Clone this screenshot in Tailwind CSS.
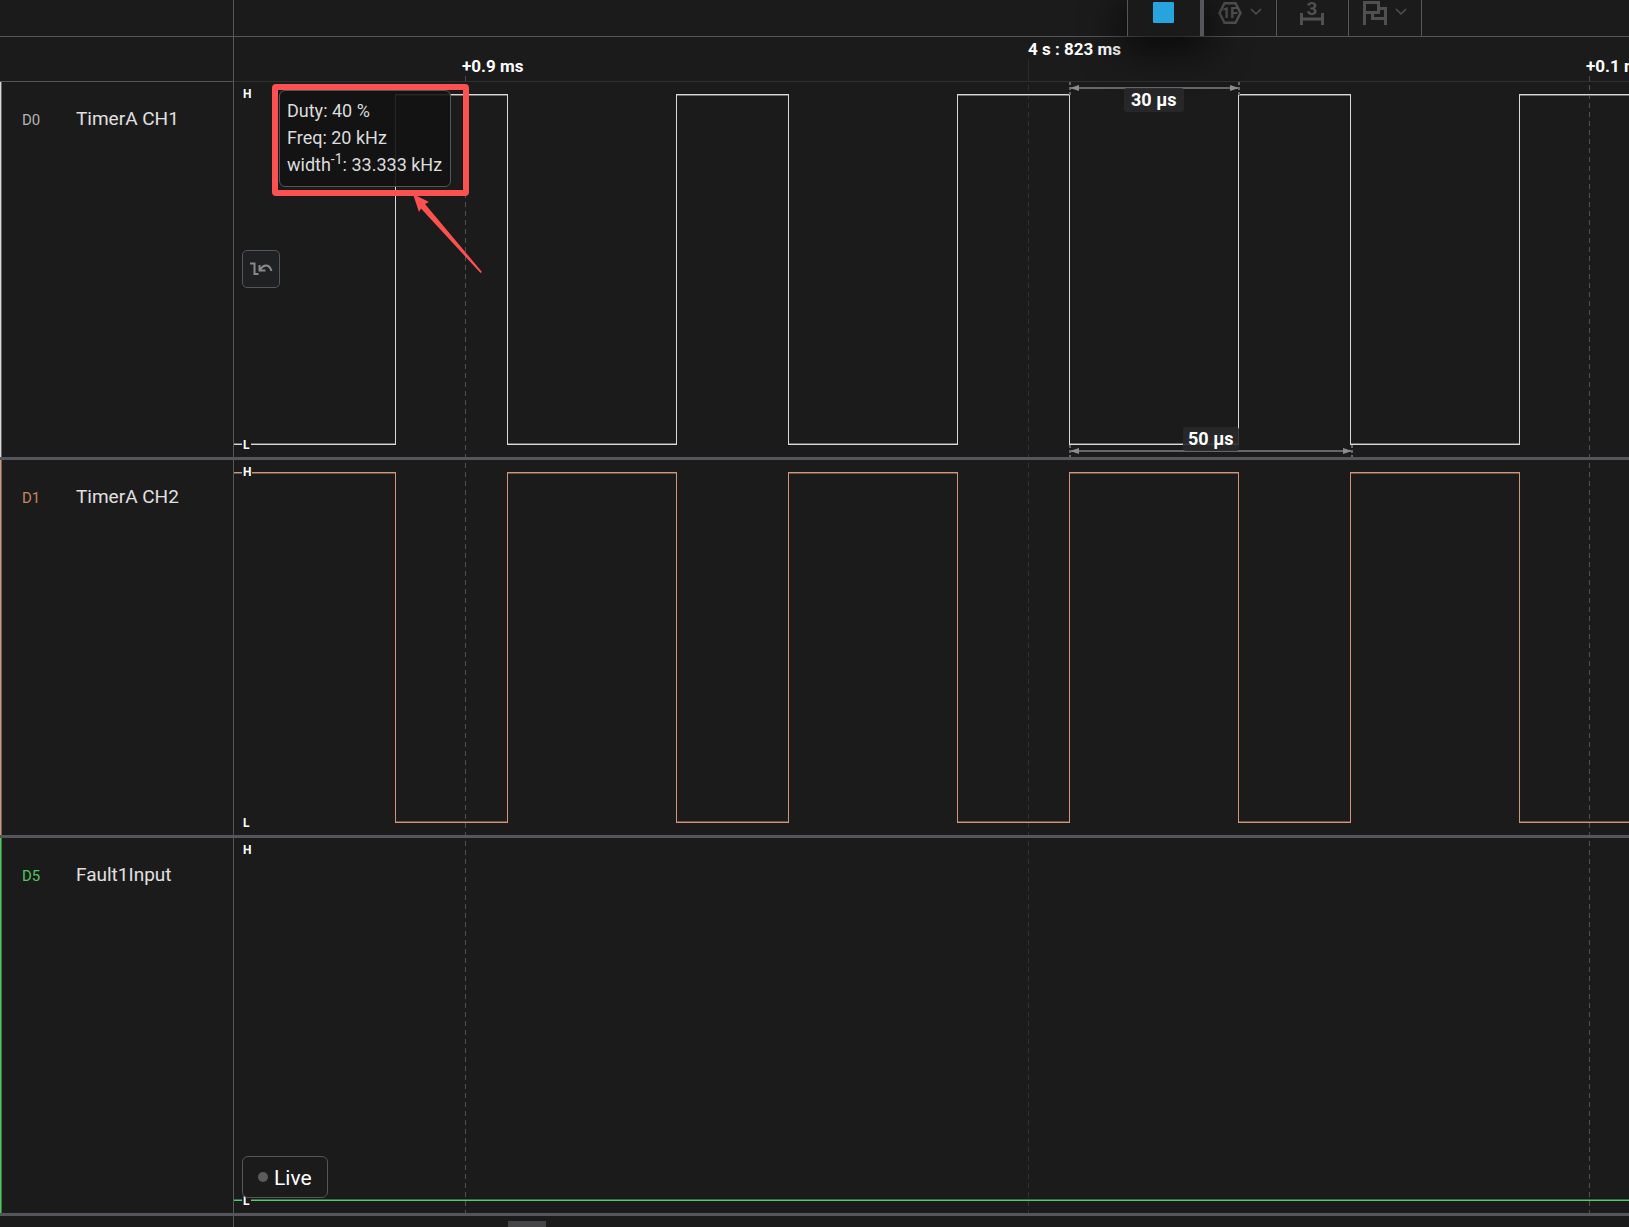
<!DOCTYPE html>
<html lang="en">
<head>
<meta charset="utf-8">
<title>Logic analyzer</title>
<script src="https://cdn.jsdelivr.net/npm/@tailwindcss/browser@4"></script>
</head>
<body class="relative flex min-h-screen flex-col overflow-hidden bg-[#1b1b1b] font-['Roboto',sans-serif] text-[#e0e0e0]">

<header class="flex h-[37px] border-b border-[#55555c]">
  <div class="w-[234px] shrink-0 border-r border-[#55555c]"></div>
  <div class="flex min-w-0 flex-1 justify-end pr-[207px]">
    <button aria-label="Stop capture" class="relative z-10 flex w-[77px] border-r-4 border-l border-[#55555c] bg-[#1a1a1a] pt-[2px] pl-[25px] shadow-[0_8px_40px_4px_rgba(0,0,0,0.75)]"><span class="block size-[21px] rounded-[1px] bg-[#27a3dd]"></span></button>
    <button aria-label="Trigger" class="flex w-[73px] gap-2 border-r border-[#55555c] pt-[2px] pl-[14px]">
      <svg class="h-[22px] w-[24px]" viewBox="0 0 24 22" fill="none" stroke="#505050" stroke-width="2.500"><path d="M6.500 1.300h11l5 9.700-5 9.700h-11L1.500 11z"/><text x="12" y="16" text-anchor="middle" font-size="14" font-weight="900" fill="#505050" stroke="none">1F</text></svg>
      <svg class="mt-[6px] h-[8px] w-[12px]" viewBox="0 0 12 8" fill="none" stroke="#505050" stroke-width="1.500"><path d="M1 1l5 5 5-5"/></svg>
    </button>
    <button aria-label="Measure" class="flex w-[72px] border-r border-[#55555c] pl-[23px]">
      <svg class="h-[26px] w-[24px] overflow-visible" viewBox="0 0 24 26" fill="none" stroke="#505050" stroke-width="3"><path d="M1.500 13v12M22.500 13v12M1.500 19h21"/><text x="12" y="15" text-anchor="middle" font-size="19" font-weight="700" fill="#505050" stroke="none">3</text></svg>
    </button>
    <button aria-label="Markers" class="flex w-[73px] gap-2 border-r border-[#55555c] pl-[14px]">
      <svg class="h-[26px] w-[24px]" viewBox="0 0 24 26" fill="none" stroke="#505050" stroke-width="3"><path d="M1.500 25V2.500h14v10H1.500M16 8.500h6.500V25M22.500 18.500H9.500V14"/></svg>
      <svg class="mt-[8px] h-[8px] w-[12px]" viewBox="0 0 12 8" fill="none" stroke="#505050" stroke-width="1.500"><path d="M1 1l5 5 5-5"/></svg>
    </button>
  </div>
</header>

<div class="flex h-[45px]">
  <div class="w-[234px] shrink-0 border-r border-b border-[#55555c]"></div>
  <div class="relative min-w-0 flex-1 overflow-hidden border-b border-[#303033] text-[17px] leading-5 font-bold whitespace-nowrap text-white">
    <span class="absolute top-[39px] left-[231px] h-[5px] w-px bg-[#4a4a4d]"></span>
    <span class="absolute top-[22px] left-[794px] h-[22px] w-px bg-[#29292d]"></span>
    <span class="absolute top-[39px] left-[1355px] h-[5px] w-px bg-[#4a4a4d]"></span>
    <span class="absolute top-[19px] left-[228px]">+0.9 ms</span>
    <span class="absolute top-[2px] left-[794px]">4 s : 823 ms</span>
    <span class="absolute top-[19px] left-[1352px]">+0.1 ms</span>
  </div>
</div>

<main class="relative">
  <section class="flex h-[378px] border-b-[3px] border-[#55555c]">
    <div class="flex w-[234px] shrink-0 border-r border-l border-r-[#55555c] border-l-[#d8d8d8]">
      <div class="flex flex-1 items-baseline border-l border-[#666] pt-[25px] pl-5"><span class="w-[54px] text-[15px] text-[#b4b4b4]">D0</span><h2 class="text-[19px] leading-6">TimerA CH1</h2></div>
    </div>
    <div class="relative min-w-0 flex-1 overflow-hidden">
      <svg class="h-[375px] w-full" fill="none" shape-rendering="crispEdges">
        <path stroke="#505054" stroke-dasharray="5 4" d="M231.500 3v372M1355.500 3v372"/><path stroke="#303036" stroke-dasharray="5 4" d="M794.500 3v372"/>
        <path stroke="#6e6e6e" d="M0 361.500h161M162 13.500h111M274 361.500h168M443 13.500h111M555 361.500h168M724 13.500h111M836 361.500h168M1005 13.500h111M1117 361.500h168M1286 13.500h1400"/>
        <path stroke="#d8d8d8" d="M0 362.500H161.500V12.500H273.500V362.500H442.500V12.500H554.500V362.500H723.500V12.500H835.500V362.500H1004.500V12.500H1116.500V362.500H1285.500V12.500H3000"/>
        <g stroke="#666"><path stroke-width="2" d="M836 6h169M836 369h282"/><path stroke-width="2" stroke-dasharray="3 2" d="M836 0v13M1005 0v13M836 363v12M1118 363v12"/></g>
        <g fill="#8c8c8c" shape-rendering="auto"><path d="M836 6l9-3v6zM1005 6l-9-3v6zM836 369l9-3v6zM1118 369l-9-3v6z"/></g>
      </svg>
      <span class="absolute top-[5px] left-[8px] rounded-sm bg-[#1b1b1b] px-px text-[12px] leading-[14px] font-bold text-white">H</span>
      <span class="absolute top-[356px] left-[8px] rounded-sm bg-[#1b1b1b] px-px text-[12px] leading-[14px] font-bold text-white">L</span>
      <span class="absolute top-[6px] left-[890px] rounded-[3px] bg-[#29292b]/90 px-[7px] text-[18px] leading-6 font-bold text-white">30 µs</span>
      <span class="absolute top-[345px] left-[949px] rounded-[3px] bg-[#29292b]/90 px-[5px] text-[18px] leading-6 font-bold text-white">50 µs</span>
      <button aria-label="Jump to previous edge" class="absolute top-[168px] left-[8px] flex size-[38px] items-center justify-center rounded-[5px] border border-[#55555c] bg-[#202123]">
        <svg class="h-[14px] w-[24px]" viewBox="0 0 24 14" fill="none" stroke="#8a8a8a" stroke-width="2"><path d="M1 1.500h4.500v10.500h4"/><path d="M22.500 9c-2-6.500-7-7.500-11.500-1.500M10.500 3v5.500h6"/></svg>
      </button>
      <div class="absolute top-[8px] left-[45px] rounded-[6px] border border-[#55555c] bg-[#131313]/90 pt-[6px] pr-2 pb-[8px] pl-[7px] text-[18px] leading-[27px] whitespace-nowrap text-[#dcdcdc]">
        <p>Duty: 40 %</p><p>Freq: 20 kHz</p><p>width<sup class="text-[14px]">-1</sup>: 33.333 kHz</p>
      </div>
    </div>
  </section>

  <section class="flex h-[378px] border-b-[3px] border-[#55555c]">
    <div class="flex w-[234px] shrink-0 border-r border-l border-r-[#55555c] border-l-[#d0967a]">
      <div class="flex flex-1 items-baseline border-l border-[#7a6054] pt-[25px] pl-5"><span class="w-[54px] text-[15px] text-[#c98663]">D1</span><h2 class="text-[19px] leading-6">TimerA CH2</h2></div>
    </div>
    <div class="relative min-w-0 flex-1 overflow-hidden">
      <svg class="h-[375px] w-full" fill="none" shape-rendering="crispEdges">
        <path stroke="#505054" stroke-dasharray="5 4" d="M231.500 3v372M1355.500 3v372"/><path stroke="#303036" stroke-dasharray="5 4" d="M794.500 3v372"/>
        <path stroke="#6f5245" d="M0 13.500h161M162 361.500h111M274 13.500h168M443 361.500h111M555 13.500h168M724 361.500h111M836 13.500h168M1005 361.500h111M1117 13.500h168M1286 361.500h1400"/>
        <path stroke="#d0967a" d="M0 12.500H161.500V362.500H273.500V12.500H442.500V362.500H554.500V12.500H723.500V362.500H835.500V12.500H1004.500V362.500H1116.500V12.500H1285.500V362.500H3000"/>
      </svg>
      <span class="absolute top-[5px] left-[8px] rounded-sm bg-[#1b1b1b] px-px text-[12px] leading-[14px] font-bold text-white">H</span>
      <span class="absolute top-[356px] left-[8px] rounded-sm bg-[#1b1b1b] px-px text-[12px] leading-[14px] font-bold text-white">L</span>
    </div>
  </section>

  <section class="flex h-[378px] border-b-[3px] border-[#55555c]">
    <div class="flex w-[234px] shrink-0 border-r border-l border-r-[#55555c] border-l-[#50c860]">
      <div class="flex flex-1 items-baseline border-l border-[#3a7a44] pt-[25px] pl-5"><span class="w-[54px] text-[15px] text-[#4fc75f]">D5</span><h2 class="text-[19px] leading-6">Fault1Input</h2></div>
    </div>
    <div class="relative min-w-0 flex-1 overflow-hidden">
      <svg class="h-[375px] w-full" fill="none" shape-rendering="crispEdges">
        <path stroke="#505054" stroke-dasharray="5 4" d="M231.500 3v372M1355.500 3v372"/><path stroke="#303036" stroke-dasharray="5 4" d="M794.500 3v372"/>
        <path stroke="#3f6b46" d="M0 361.500h3000"/><path stroke="#55cc66" d="M0 362.500h3000"/>
      </svg>
      <span class="absolute top-[5px] left-[8px] rounded-sm bg-[#1b1b1b] px-px text-[12px] leading-[14px] font-bold text-white">H</span>
      <span class="absolute top-[356px] left-[8px] rounded-sm bg-[#1b1b1b] px-px text-[12px] leading-[14px] font-bold text-white">L</span>
      <button class="absolute top-[318px] left-[8px] flex h-[42px] w-[86px] items-center gap-[6px] rounded-[6px] border border-[#55555c] bg-[#1b1b1b] pl-[15px] text-[21px] text-white"><span class="size-[10px] rounded-full bg-[#5c5c5c]"></span><span class="pt-[3px]">Live</span></button>
    </div>
  </section>

  <svg class="pointer-events-none absolute top-0 left-[260px] h-[200px] w-[240px]" viewBox="0 0 240 200" fill="none">
    <rect x="15" y="5" width="191" height="106" rx="1" stroke="#fc5151" stroke-width="6"/>
    <path fill="#fc5151" d="M153 112L169 120L165 122L222 190L220.500 191L161 126.500L159 130z"/>
  </svg>
</main>

<footer class="flex h-[11px]">
  <div class="w-[234px] shrink-0 border-r border-[#55555c]"></div>
  <div class="min-w-0 flex-1 pt-[5px] pl-[274px]"><div class="h-[6px] w-[38px] bg-[#454547]"></div></div>
</footer>
</body>
</html>
